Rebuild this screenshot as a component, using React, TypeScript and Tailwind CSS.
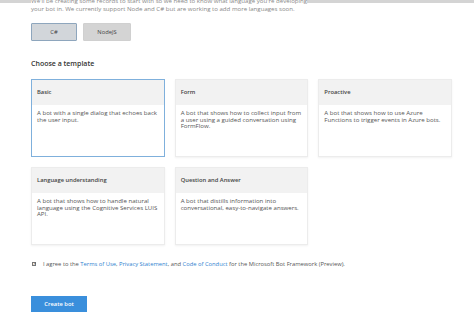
import type { ReactElement } from 'react'

type Template = { name: string; text: string }

const templates: Template[] = [
  { name: 'Basic', text: 'A bot with a single dialog that echoes back the user input.' },
  { name: 'Form', text: 'A bot that shows how to collect input from a user using a guided conversation using FormFlow.' },
  { name: 'Proactive', text: 'A bot that shows how to use Azure Functions to trigger events in Azure bots.' },
  {
    name: 'Language understanding',
    text: 'A bot that shows how to handle natural language using the Cognitive Services LUIS API.'
  },
  { name: 'Question and Answer', text: 'A bot that distills information into conversational, easy-to-navigate answers.' }
]

function TemplateCard({ template, selected }: { template: Template; selected: boolean }): ReactElement {
  return (
    <div
      className={
        selected
          ? 'flex h-[78px] flex-col border border-[#7fb0dc] bg-white'
          : 'flex h-[78px] flex-col border border-[#ececec] bg-white shadow-[0_1px_2px_rgba(0,0,0,0.06)]'
      }
    >
      <div className="flex h-[25px] items-center bg-[#f2f2f2] px-[5px] text-[5.8px] font-semibold text-[#444]">
        {template.name}
      </div>
      <p className="pl-[5px] pr-[6px] pt-[5px] text-[6.1px] leading-[6.7px] text-[#555]">{template.text}</p>
    </div>
  )
}

export default function App(): ReactElement {
  return (
    <div className="relative h-[325px] w-[474px] overflow-hidden bg-white font-['Open_Sans',sans-serif]">
      <div className="absolute left-0 top-0 h-[3px] w-full bg-[#d4d4d4]" />
      <div className="relative pl-[31px] pr-[20px]">
        <p className="mt-[-3px] whitespace-nowrap text-[6.1px] leading-[8px] text-[#888]">
          <span className="bg-white">
            We'll be creating some records to start with so we need to know what language you're developing
          </span>
          <br />
          your bot in. We currently support Node and C# but are working to add more languages soon.
        </p>

        <div className="mt-[10px] flex gap-[6px]">
          <button className="h-[18px] w-[46px] rounded-[1px] border border-[#8ea6bd] bg-[#d2d6da] text-[5.8px] text-[#444]">
            C#
          </button>
          <button className="h-[18px] w-[48px] rounded-[1px] border border-[#d0d0d0] bg-[#d4d4d4] text-[5.8px] text-[#444]">
            NodeJS
          </button>
        </div>

        <h2 className="mt-[18px] text-[7px] font-semibold leading-[10px] text-[#333]">Choose a template</h2>

        <div className="mt-[10px] grid w-[421px] grid-cols-3 gap-[10px]">
          {templates.map((t, i) => (
            <TemplateCard key={t.name} template={t} selected={i === 0} />
          ))}
        </div>

        <label className="mt-[15px] flex items-center text-[5.8px] leading-[8px] text-[#555]">
          <span className="ml-[1px] flex h-[4px] w-[4px] items-center justify-center border border-[#777] bg-white text-[4px] leading-none text-[#333]">
            ✓
          </span>
          <span className="ml-[7px]">
            I agree to the <a className="text-[#2f7fd0]">Terms of Use</a>,{' '}
            <a className="text-[#2f7fd0]">Privacy Statement</a>, and <a className="text-[#2f7fd0]">Code of Conduct</a>{' '}
            for the Microsoft Bot Framework (Preview).
          </span>
        </label>

        <button className="mt-[28px] h-[16px] w-[56px] bg-[#3a8fdc] text-[5.8px] font-semibold text-white">
          Create bot
        </button>
      </div>
    </div>
  )
}
